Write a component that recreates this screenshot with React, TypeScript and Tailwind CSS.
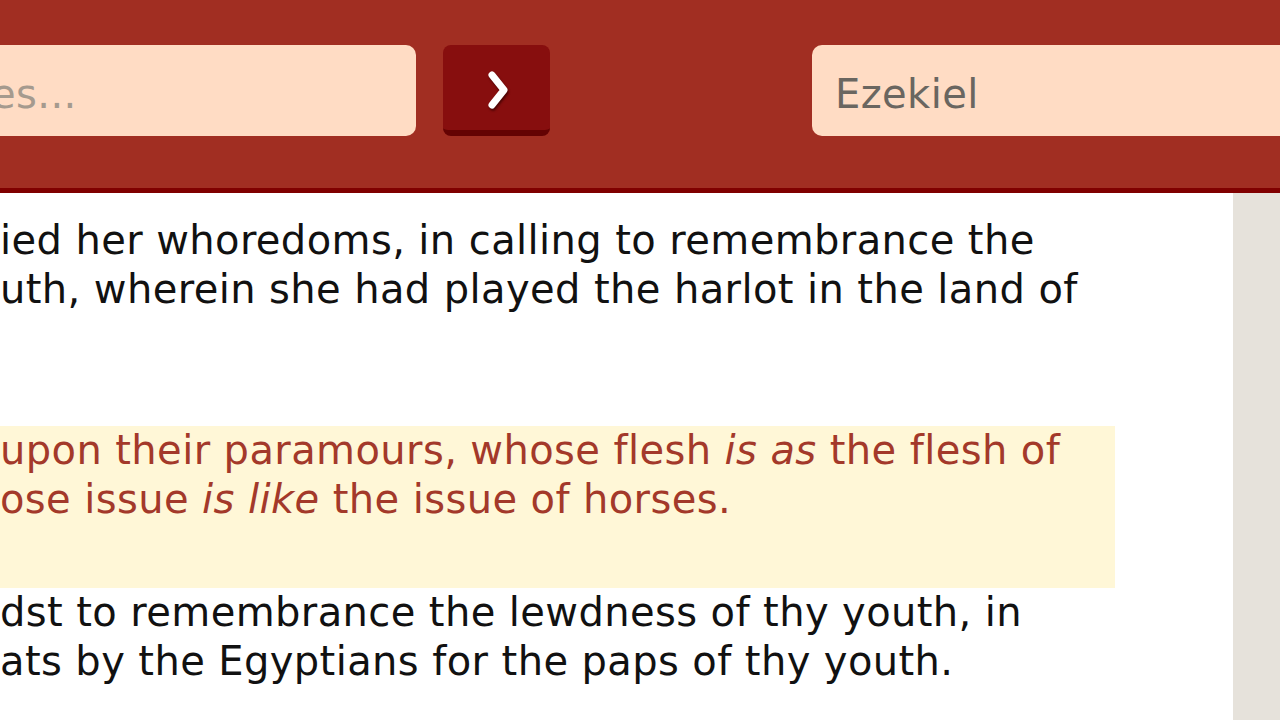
import type { ReactNode } from "react";

type LineProps = { hidden: string; children?: ReactNode };

// the page is scrolled sideways, so the start of each line sits off screen to the left
function Line({ hidden, children }: LineProps) {
  return (
    <div className="flex whitespace-nowrap">
      <span className="flex w-0 min-w-0 shrink-0 justify-end">{hidden}</span>
      <span>{children}</span>
    </div>
  );
}

export default function App() {
  return (
    <div className="flex h-[720px] w-[1280px] flex-col overflow-hidden bg-white font-['DejaVu_Sans',sans-serif]">
      <header className="h-[193px] shrink-0 overflow-hidden border-b-[5px] border-[#800000] bg-[#A12E22]">
        <div className="ml-[-272px] flex items-start pt-[45px]">
          <input
            type="text"
            placeholder="Search verses..."
            className="h-[91px] w-[688px] shrink-0 rounded-[10px] bg-[#FFDCC4] pl-[23px] pt-[7px] text-[40px] tracking-[0.4px] text-[#6A6660] outline-none placeholder:text-[#A59A8E]"
          />
          <button className="ml-[27px] flex h-[91px] w-[107px] shrink-0 items-center justify-center rounded-[8px] border-b-[6px] border-[#640303] bg-[#870E0E]">
            <svg width="28" height="44" viewBox="0 0 28 44" className="ml-[2px] mt-[4px] drop-shadow-[1px_2px_1px_rgba(60,0,0,0.8)]">
              <polyline points="8,7 20,22 8,37" fill="none" stroke="white" strokeWidth="7" strokeLinecap="round" strokeLinejoin="round" />
            </svg>
          </button>
          <input
            type="text"
            defaultValue="Ezekiel"
            className="ml-[262px] h-[91px] w-[560px] shrink-0 rounded-[10px] bg-[#FFDCC4] pl-[23px] pt-[7px] text-[40px] tracking-[0.4px] text-[#6A6660] outline-none"
          />
        </div>
      </header>

      <div className="flex min-h-0 flex-1">
        <main className="min-w-0 flex-1 overflow-hidden pt-[23px] text-[40px] leading-[49px] tracking-[0.4px] text-[#111111]">
          <div className="mr-[118px]">
            <div className="pb-[63px]">
              <Line hidden="19 Yet she multipl">ied her whoredoms, in calling to remembrance the</Line>
              <Line hidden="days of her yo">uth, wherein she had played the harlot in the land of</Line>
              <Line hidden="Egypt." />
            </div>
            <div className="bg-[#FFF7D7] pb-[64px] text-[#A3392A]">
              <Line hidden="20 For she doted ">
                upon their paramours, whose flesh <i>is as</i> the flesh of
              </Line>
              <Line hidden="asses, and wh">
                ose issue <i>is like</i> the issue of horses.
              </Line>
            </div>
            <div className="pb-[62px]">
              <Line hidden="21 Thus thou calle">dst to remembrance the lewdness of thy youth, in</Line>
              <Line hidden="bruising thy te">ats by the Egyptians for the paps of thy youth.</Line>
            </div>
          </div>
        </main>
        <aside className="w-[47px] shrink-0 bg-[#E6E2DB]" />
      </div>
    </div>
  );
}
